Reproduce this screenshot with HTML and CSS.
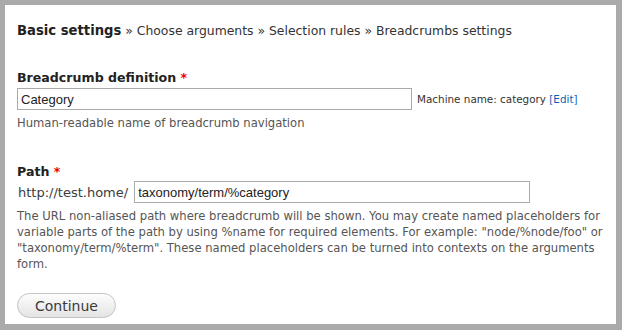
FILE: index.html
```html
<!DOCTYPE html>
<html lang="en">
  <head>
    <meta charset="UTF-8" />
    <title>Breadcrumb settings</title>
    <link rel="stylesheet" href="styles.css">
  </head>
  <body>
    <div class="frame">
      <h2 class="steps">
        <b>Basic settings</b> » Choose arguments » Selection rules » Breadcrumbs settings
      </h2>

      <div class="field">
        <label>Breadcrumb definition <span class="req">*</span></label>
        <div class="row">
          <input type="text" class="text name" value="Category" />
          <span class="machine">Machine name: category <a href="#">[Edit]</a></span>
        </div>
        <div class="desc">Human-readable name of breadcrumb navigation</div>
      </div>

      <div class="field path">
        <label>Path <span class="req">*</span></label>
        <div class="row">
          <span class="prefix">http://test.home/</span>
          <input type="text" class="text url" value="taxonomy/term/%category" />
        </div>
        <div class="desc">
          The URL non-aliased path where breadcrumb will be shown. You may create named placeholders for
          variable parts of the path by using %name for required elements. For example: "node/%node/foo" or
          "taxonomy/term/%term". These named placeholders can be turned into contexts on the arguments
          form.
        </div>
      </div>

      <button>Continue</button>
    </div>
  </body>
</html>
```

FILE: styles.css
```css
* {
  margin: 0;
  padding: 0;
  box-sizing: border-box;
}
body {
  width: 622px;
  height: 330px;
  font-family: "DejaVu Sans", Verdana, sans-serif;
  color: #3b3b3b;
  background: #fff;
}
.frame {
  height: 330px;
  border: 5px solid #aaaaaa;
  border-right-width: 6px;
  border-bottom-width: 6px;
  padding: 17px 12px 0 12px;
}
.steps {
  font-size: 12.4px;
  font-weight: normal;
  line-height: 18px;
  color: #333;
}
.steps b {
  font-size: 13.2px;
  color: #222;
}
.field {
  margin-top: 29px;
}
.field.path {
  margin-top: 32px;
}
label {
  display: block;
  font-size: 12.6px;
  font-weight: bold;
  line-height: 18px;
  color: #222;
}
.req {
  color: #e00;
}
.row {
  display: flex;
  align-items: center;
  margin-top: 1px;
}
.path .row {
  margin-top: 0;
}
.text {
  height: 22px;
  border: 1px solid #aaa;
  font-family: "Liberation Sans", Arial, sans-serif;
  font-size: 13px;
  padding: 0 3px;
  color: #222;
}
.name {
  width: 395px;
}
.url {
  width: 396px;
}
.machine {
  margin-left: 5px;
  font-size: 10.4px;
  color: #333;
}
.machine a {
  color: #0a5fb4;
  text-decoration: none;
}
.prefix {
  font-size: 13px;
  margin: 0 6px 0 1px;
}
.desc {
  font-size: 11.6px;
  line-height: 16px;
  color: #555;
  margin-top: 5px;
}
button {
  display: block;
  margin-top: 21px;
  width: 99px;
  height: 25px;
  border: 1px solid #c4c4c4;
  border-radius: 13px;
  background: linear-gradient(#fdfdfd, #e4e4e4);
  font-family: "DejaVu Sans", Verdana, sans-serif;
  font-size: 14px;
  color: #3a3a3a;
}
```
